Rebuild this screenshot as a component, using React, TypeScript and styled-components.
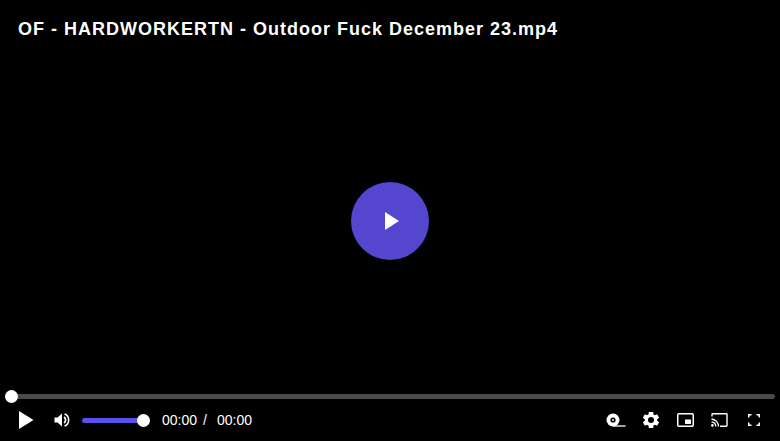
import React, { FunctionComponent } from 'react';
import styled, { createGlobalStyle } from 'styled-components';

const GlobalStyle = createGlobalStyle`
  html, body {
    margin: 0;
    padding: 0;
    background: #000;
  }
`;

const PlayerRoot = styled.div`
  position: relative;
  display: flex;
  flex-direction: column;
  justify-content: space-between;
  width: 780px;
  height: 441px;
  overflow: hidden;
  background: #000;
  color: #fff;
  font-family: 'Liberation Sans', Arial, sans-serif;
`;

const Title = styled.div`
  padding: 19px 18px 0;
  font-size: 18px;
  line-height: 21px;
  font-weight: 700;
  letter-spacing: 1px;
  white-space: nowrap;
`;

const BigPlay = styled.div`
  position: absolute;
  left: 351px;
  top: 182px;
  display: flex;
  align-items: center;
  justify-content: center;
  box-sizing: border-box;
  width: 78px;
  height: 78px;
  padding-left: 4px;
  border-radius: 50%;
  background: #5546d0;
`;

const Bottom = styled.div`
  display: flex;
  flex-direction: column;
`;

const ProgressTrack = styled.div`
  position: relative;
  height: 5px;
  margin: 0 5px;
  border-radius: 3px;
  background: #4a4a4a;
`;

const ProgressThumb = styled.div`
  position: absolute;
  left: 0;
  top: -4px;
  width: 13px;
  height: 13px;
  border-radius: 50%;
  background: #fff;
`;

const ControlBar = styled.div`
  display: flex;
  align-items: center;
  justify-content: space-between;
  height: 42px;
  padding: 0 20px 0 18px;
`;

const ControlGroup = styled.div`
  display: flex;
  align-items: center;
`;

const IconSlot = styled.div<{ $width: number; $gap?: number }>`
  display: flex;
  align-items: center;
  justify-content: center;
  width: ${(props) => props.$width}px;
  height: 20px;
  margin-right: ${(props) => props.$gap ?? 0}px;
`;

const VolumeTrack = styled.div`
  position: relative;
  width: 62px;
  height: 5px;
  margin-right: 18px;
  border-radius: 3px;
  background: #5a50f0;
`;

const VolumeThumb = styled.div`
  position: absolute;
  right: -6px;
  top: -4px;
  width: 13px;
  height: 13px;
  border-radius: 50%;
  background: #fff;
`;

const TimeText = styled.span<{ $gap?: number }>`
  margin-right: ${(props) => props.$gap ?? 0}px;
  font-size: 14px;
  line-height: 16px;
  white-space: nowrap;
`;

const App: FunctionComponent = () => (
  <PlayerRoot>
    <GlobalStyle />
    <Title>OF - HARDWORKERTN - Outdoor Fuck December 23.mp4</Title>
    <BigPlay>
      <svg width="14" height="18" viewBox="0 0 14 18">
        <path d="M0 0 L14 9 L0 18 Z" fill="#fff" />
      </svg>
    </BigPlay>
    <Bottom>
      <ProgressTrack>
        <ProgressThumb />
      </ProgressTrack>
      <ControlBar>
        <ControlGroup>
          <IconSlot $width={16} $gap={20}>
            <svg width="16" height="20" viewBox="0 0 16 20">
              <path d="M1 1 L15.5 10 L1 19 Z" fill="#fff" />
            </svg>
          </IconSlot>
          <IconSlot $width={16} $gap={12}>
            <svg width="16" height="16" viewBox="0 0 16 16">
              <path d="M0.5 5.5 H3.5 L8 1.5 V14.5 L3.5 10.5 H0.5 Z" fill="#fff" />
              <path d="M10 5 A3.6 3.6 0 0 1 10 11" stroke="#fff" strokeWidth="1.7" fill="none" />
              <path d="M10.5 2 A6.4 6.4 0 0 1 10.5 14" stroke="#fff" strokeWidth="1.5" fill="none" />
            </svg>
          </IconSlot>
          <VolumeTrack>
            <VolumeThumb />
          </VolumeTrack>
          <TimeText $gap={6}>00:00</TimeText>
          <TimeText $gap={10}>/</TimeText>
          <TimeText>00:00</TimeText>
        </ControlGroup>
        <ControlGroup>
          <IconSlot $width={20} $gap={15}>
            <svg width="20" height="14" viewBox="0 0 20 14">
              <circle cx="7" cy="7" r="6.5" fill="#fff" />
              <circle cx="7" cy="7" r="2.6" fill="#000" />
              <circle cx="7" cy="7" r="1" fill="#fff" />
              <path d="M7 13 H19.5" stroke="#fff" strokeWidth="1.3" />
            </svg>
          </IconSlot>
          <IconSlot $width={20} $gap={16}>
            <svg width="20" height="20" viewBox="0 0 24 24">
              <path
                fill="#fff"
                fillRule="evenodd"
                d="M19.4 13a7.6 7.6 0 0 0 0-2l2.3-1.8-2.3-4-2.7 1.1a7.6 7.6 0 0 0-1.7-1L14.6 2.5H9.4L9 5.3a7.6 7.6 0 0 0-1.7 1L4.6 5.2l-2.3 4L4.6 11a7.6 7.6 0 0 0 0 2l-2.3 1.8 2.3 4 2.7-1.1a7.6 7.6 0 0 0 1.7 1l.4 2.8h5.2l.4-2.8a7.6 7.6 0 0 0 1.7-1l2.7 1.1 2.3-4ZM12 15.6a3.6 3.6 0 1 1 0-7.2 3.6 3.6 0 0 1 0 7.2Z"
              />
            </svg>
          </IconSlot>
          <IconSlot $width={17} $gap={17}>
            <svg width="17" height="14" viewBox="0 0 17 14">
              <rect x="0.75" y="0.75" width="15.5" height="12.5" rx="1.2" stroke="#fff" strokeWidth="1.5" fill="none" />
              <rect x="8" y="6.5" width="6" height="4.5" fill="#fff" />
            </svg>
          </IconSlot>
          <IconSlot $width={17} $gap={20}>
            <svg width="17" height="14" viewBox="0 0 17 14">
              <path d="M1 3.5 V1.5 Q1 0.75 1.75 0.75 H15.25 Q16 0.75 16 1.5 V12.5 Q16 13.25 15.25 13.25 H9" stroke="#fff" strokeWidth="1.4" fill="none" />
              <path d="M0.5 6 A7.5 7.5 0 0 1 7.5 13.5 M0.5 8.8 A4.8 4.8 0 0 1 4.8 13.5" stroke="#fff" strokeWidth="1.3" fill="none" />
              <circle cx="1.4" cy="12.4" r="1.3" fill="#fff" />
            </svg>
          </IconSlot>
          <IconSlot $width={12}>
            <svg width="12" height="12" viewBox="0 0 12 12">
              <path d="M0.75 3.5 V0.75 H3.5 M8.5 0.75 H11.25 V3.5 M11.25 8.5 V11.25 H8.5 M3.5 11.25 H0.75 V8.5" stroke="#fff" strokeWidth="1.5" fill="none" />
            </svg>
          </IconSlot>
        </ControlGroup>
      </ControlBar>
    </Bottom>
  </PlayerRoot>
);

export default App;
